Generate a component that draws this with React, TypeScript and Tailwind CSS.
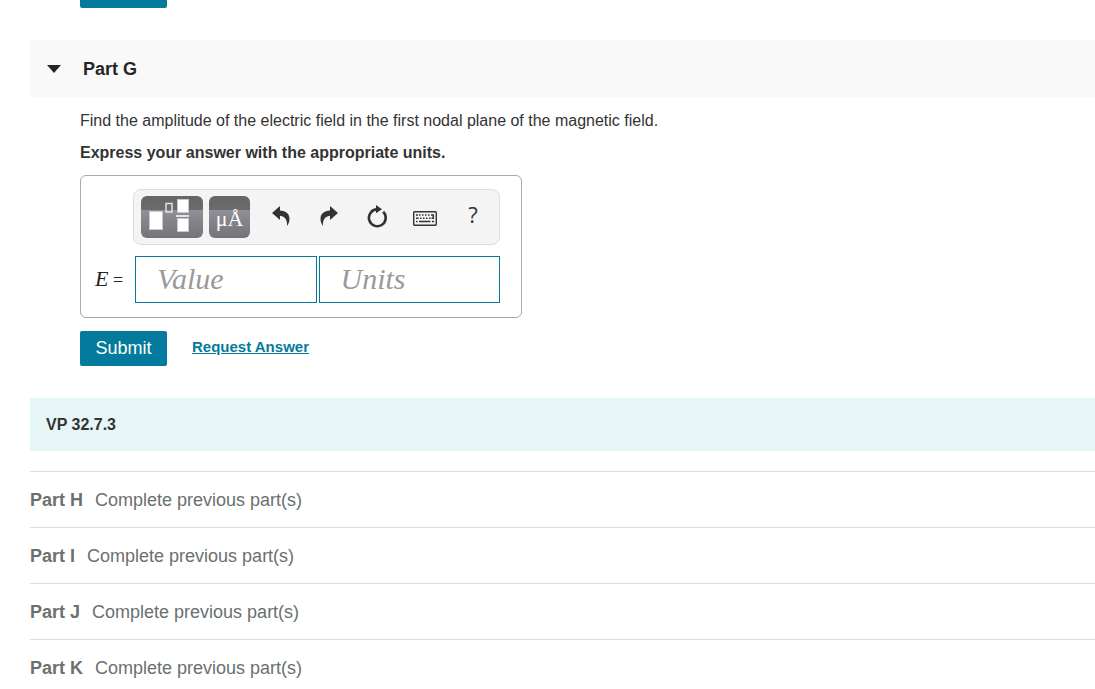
import type { ReactNode } from 'react';

const lockedParts = ['Part H', 'Part I', 'Part J', 'Part K'];

function TemplatesIcon() {
  return (
    <svg width="62" height="42" viewBox="0 0 62 42" aria-hidden="true">
      <g fill="#fff" stroke="#c8c8c8" strokeWidth="1">
        <rect x="8.5" y="15.5" width="13" height="18" />
        <rect x="36.5" y="3.5" width="11" height="13" />
        <rect x="36.5" y="22.5" width="11" height="13" />
      </g>
      <rect x="25" y="7.500" width="6" height="8.500" fill="none" stroke="#e4e4e4" strokeWidth="1.500" />
      <rect x="35" y="19" width="13" height="2" fill="#e4e4e4" />
    </svg>
  );
}

function UndoIcon() {
  return (
    <svg width="18" height="20" viewBox="0 0 18 20" fill="#333" aria-hidden="true">
      <path d="M0 7 8 0v4.500c6 .1 9.500 3.600 9.500 8.200 0 3-1 5.500-2.500 7.300C15.500 15.500 14 10.500 8 9.800V14Z" />
    </svg>
  );
}

function RedoIcon() {
  return (
    <svg width="18" height="20" viewBox="0 0 18 20" fill="#333" aria-hidden="true">
      <path d="M18 7 10 0v4.500c-6 .1-9.500 3.600-9.500 8.200 0 3 1 5.500 2.500 7.300C2.500 15.500 4 10.500 10 9.800V14Z" />
    </svg>
  );
}

function ResetIcon() {
  return (
    <svg width="20" height="23" viewBox="0 0 20 23" aria-hidden="true">
      <path d="M10 4.400A8.400 8.400 0 1 0 16.200 6.800" fill="none" stroke="#333" strokeWidth="2.6" />
      <path d="M9 0 15 4.200 9 8.200Z" fill="#333" />
    </svg>
  );
}

function KeyboardIcon() {
  return (
    <svg width="24" height="15" viewBox="0 0 24 15" fill="none" stroke="#333" aria-hidden="true">
      <rect x="0.7" y="0.7" width="22.6" height="13.600" rx="1" strokeWidth="1.400" />
      <path d="M3 4h2M6 4h1.500M9 4h1.500M12 4h1.500M15 4h1.500M18 4h3" strokeWidth="1.500" />
      <path d="M3 7.300h2.500M7 7.300h1.500M10 7.300h1.500M13 7.300h1.500M16 7.300h1.500M18.500 7.300H21M20.300 4v4" strokeWidth="1.500" />
      <path d="M3 10.500h1.500M6 10.500h11.500M19 10.500h2" strokeWidth="1.500" />
    </svg>
  );
}

function ToolButton({ label, children }: { label: string; children: ReactNode }) {
  return (
    <button type="button" aria-label={label} className="flex h-10 w-12 items-center justify-center">
      {children}
    </button>
  );
}

function Toolbar() {
  const darkButton =
    'h-[42px] shrink-0 overflow-hidden rounded-md bg-[linear-gradient(to_bottom,#666_0,#6b6b6b_14px,#918f97_14px,#737377_100%)] text-white';

  return (
    <div className="flex h-14 items-start rounded-lg border border-[#dcdcdc] bg-[#f4f4f4] py-1.5 pl-[7px]">
      <button type="button" aria-label="Templates" className={`${darkButton} mr-1.5 w-[62px]`}>
        <TemplatesIcon />
      </button>
      <button
        type="button"
        className={`${darkButton} mr-[7px] w-[41px] pt-0.5 font-['Liberation_Serif',serif] text-[22px]`}
      >
        μÅ
      </button>
      <ToolButton label="Undo"><UndoIcon /></ToolButton>
      <ToolButton label="Redo"><RedoIcon /></ToolButton>
      <ToolButton label="Reset"><ResetIcon /></ToolButton>
      <ToolButton label="Keyboard">
        <span className="pt-1"><KeyboardIcon /></span>
      </ToolButton>
      <ToolButton label="Help">
        <span className="pb-1 font-['Open_Sans',sans-serif] text-[22px] text-[#333]">?</span>
      </ToolButton>
    </div>
  );
}

function AnswerBox() {
  const field =
    "h-[47px] w-full min-w-0 flex-1 border border-[#047a9c] bg-white pb-0.5 pl-[21px] font-['Liberation_Serif',serif] text-3xl text-[#333] outline-none placeholder:italic placeholder:text-[#999]";

  return (
    <div className="w-full max-w-[442px] rounded-md border border-[#a9a9a9] pt-[13px] pr-[21px] pb-3.5 pl-3.5">
      <div className="pl-[38px]">
        <Toolbar />
      </div>
      <div className="mt-[11px] flex items-center">
        <label htmlFor="value" className="w-10 shrink-0 font-['Liberation_Serif',serif] text-lg text-[#222]">
          <i className="text-[22px]">E</i> =
        </label>
        <div className="flex min-w-0 flex-1 gap-0.5">
          <input id="value" type="text" placeholder="Value" className={field} />
          <input type="text" aria-label="Units" placeholder="Units" className={field} />
        </div>
      </div>
    </div>
  );
}

export default function App() {
  return (
    <main className="overflow-hidden bg-white pl-[30px] font-['Liberation_Sans',Arial,sans-serif] text-base text-[#333]">
      <div className="flex h-2 items-end overflow-hidden pl-[50px]">
        <button type="button" aria-label="Submit" className="h-[35px] w-[87px] shrink-0 rounded-xs bg-[#047a9c]" />
      </div>

      <section className="mt-8">
        <h2 className="bg-[#f9f9f9] text-lg font-bold text-[#252525]">
          <button type="button" aria-expanded="true" className="flex h-[57px] w-full items-center pl-[17px]">
            <svg width="14" height="8" viewBox="0 0 14 8" className="mr-[22px]" aria-hidden="true">
              <path d="M0 0h14L7 8Z" fill="#252525" />
            </svg>
            Part G
          </button>
        </h2>
        <div className="px-[50px] pt-3">
          <p>Find the amplitude of the electric field in the first nodal plane of the magnetic field.</p>
          <p className="mt-2 mb-[10px] font-bold">Express your answer with the appropriate units.</p>
          <AnswerBox />
          <div className="mt-[13px] flex items-center">
            <button type="button" className="h-[35px] w-[87px] rounded-xs bg-[#047a9c] pb-0.5 text-lg text-white">
              Submit
            </button>
            <a href="#request-answer" className="ml-[25px] pb-0.5 text-[15px] font-bold text-[#047a9c] underline">
              Request Answer
            </a>
          </div>
        </div>
      </section>

      <h2 className="mt-8 mb-5 flex h-[53px] items-center bg-[#e6f6f6] px-4 font-bold">VP 32.7.3</h2>

      {lockedParts.map((part) => (
        <section key={part} className="flex h-14 items-center gap-3 border-t border-[#dedede] text-lg text-[#6a7070]">
          <h3 className="font-bold">{part}</h3>
          <p>Complete previous part(s)</p>
        </section>
      ))}
    </main>
  );
}
